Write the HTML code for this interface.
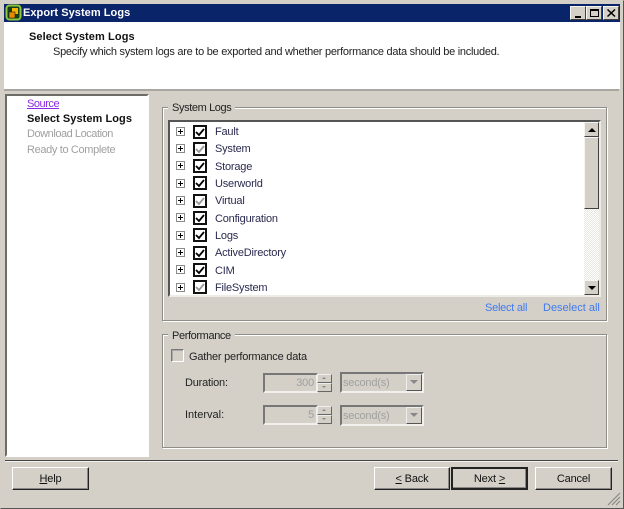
<!DOCTYPE html>
<html><head><meta charset="utf-8"><style>
html,body{margin:0;padding:0}
body{width:624px;height:509px;overflow:hidden;position:relative;background:#d4d0c8;font:11px/13px "Liberation Sans",sans-serif;color:#111}
div,span.a{position:absolute;box-sizing:border-box}
.t{white-space:nowrap}
.sunk{border:2px solid;border-color:#6e6c68 #fff #fff #6e6c68;background:#fff}
.grp{border:1px solid #8f8d88;box-shadow:1px 1px 0 #fff,inset 1px 1px 0 #fff}
.lg{background:#d4d0c8;padding:0 4px;color:#222;white-space:nowrap;letter-spacing:-.38px}
.btn{background:#d4d0c8;border:1px solid;border-color:#fff #222 #222 #fff;box-shadow:inset -1px -1px 0 #8a8884;text-align:center;line-height:23px;height:23px;width:77px;color:#111;letter-spacing:-.15px}
.pm{width:9px;height:9px;border:1px solid #8a8a8a;background:#fff;left:176px}
.pm:before{content:"";position:absolute;left:1px;top:3px;width:5px;height:1px;background:#000}
.pm:after{content:"";position:absolute;left:3px;top:1px;width:1px;height:5px;background:#000}
.cb{width:14px;height:14px;left:193px;border:2px solid #111;background:#fff}
.cb svg{position:absolute;left:0;top:0}
.lbl{left:215px;color:#2a2a50;letter-spacing:-.2px;white-space:nowrap}
.sb{background:#d4d0c8;border:1px solid;border-color:#f4f4f0 #404040 #404040 #f4f4f0}
.dis{background:#d4d0c8;border:2px solid;border-color:#777 #f2f0ec #f2f0ec #777;color:#a0a0a0;letter-spacing:-.2px}
.up{left:4px;top:2px;border:2px solid transparent;border-top:0;border-bottom:2px solid #888;width:0;height:0}
.dn{left:4px;top:2px;border:2px solid transparent;border-bottom:0;border-top:2px solid #888;width:0;height:0}
</style></head><body>
<div style="left:0;top:0;width:624px;height:509px;border:1px solid #d4d0c8;border-right-color:#555;border-bottom-color:#555"></div>
<div style="left:4px;top:4px;width:616px;height:18px;background:#0a246a"></div>
<svg style="position:absolute;left:5px;top:4px" width="18" height="18" viewBox="0 0 18 18"><rect x="1.5" y="1.5" width="14" height="14" rx="3" fill="#184018" stroke="#8cc63f" stroke-width="2"/><rect x="7" y="4" width="6" height="6" fill="#f5b400"/><rect x="4" y="8" width="6" height="6" fill="#e88a00" stroke="#222" stroke-width=".6"/></svg>
<div class="t" style="left:23px;top:7px;color:#fff;font-weight:bold;font-size:11px;letter-spacing:.05px">Export System Logs</div>
<div class="sb" style="left:570px;top:6px;width:16px;height:14px;background:#d4d0c8"><div style="left:4px;top:9px;width:6px;height:2px;background:#000"></div></div>
<div class="sb" style="left:586px;top:6px;width:16px;height:14px"><div style="left:3px;top:2px;width:9px;height:8px;border:1px solid #000;border-top-width:2px"></div></div>
<div class="sb" style="left:603px;top:6px;width:16px;height:14px"><svg style="position:absolute;left:3px;top:2px" width="9" height="8"><path d="M0.5 0.5L8 7.5M8 .5L.5 7.5" stroke="#000" stroke-width="1.5"/></svg></div>
<div style="left:4px;top:22px;width:616px;height:67px;background:#fff"></div>
<div style="left:4px;top:89px;width:615px;height:2px;background:#a8a6a0"></div>
<div class="t" style="left:29px;top:31px;font-weight:bold;color:#111;letter-spacing:.1px">Select System Logs</div>
<div class="t" style="left:53px;top:46px;color:#222;letter-spacing:-.27px">Specify which system logs are to be exported and whether performance data should be included.</div>

<div class="sunk" style="left:5px;top:94px;width:144px;height:363px"></div>
<div class="t" style="left:27px;top:98px;color:#8a2be2;text-decoration:underline;letter-spacing:-.45px">Source</div>
<div class="t" style="left:27px;top:113px;font-weight:bold;color:#111;letter-spacing:.06px">Select System Logs</div>
<div class="t" style="left:27px;top:128px;color:#a0a0a0;letter-spacing:-.45px">Download Location</div>
<div class="t" style="left:27px;top:144px;color:#a0a0a0;letter-spacing:-.35px">Ready to Complete</div>

<div class="grp" style="left:162px;top:107px;width:445px;height:214px"></div>
<div class="lg" style="left:168px;top:102px">System Logs</div>
<div class="sunk" style="left:168px;top:120px;width:433px;height:177px;border-color:#555 #eeece6 #eeece6 #555"></div>

<div class="pm" style="top:127px"></div><div class="cb" style="top:125px"><svg width="10" height="10"><path d="M1 5L4 8L9 2" stroke="#000" stroke-width="1.8" fill="none"/></svg></div><div class="lbl" style="top:126px">Fault</div>
<div class="pm" style="top:144px"></div><div class="cb" style="top:142px"><svg width="10" height="10"><path d="M1 5L4 8L9 2" stroke="#999" stroke-width="1.8" fill="none"/></svg></div><div class="lbl" style="top:143px">System</div>
<div class="pm" style="top:161px"></div><div class="cb" style="top:159px"><svg width="10" height="10"><path d="M1 5L4 8L9 2" stroke="#000" stroke-width="1.8" fill="none"/></svg></div><div class="lbl" style="top:161px">Storage</div>
<div class="pm" style="top:179px"></div><div class="cb" style="top:176px"><svg width="10" height="10"><path d="M1 5L4 8L9 2" stroke="#000" stroke-width="1.8" fill="none"/></svg></div><div class="lbl" style="top:178px">Userworld</div>
<div class="pm" style="top:196px"></div><div class="cb" style="top:194px"><svg width="10" height="10"><path d="M1 5L4 8L9 2" stroke="#999" stroke-width="1.8" fill="none"/></svg></div><div class="lbl" style="top:195px">Virtual</div>
<div class="pm" style="top:213px"></div><div class="cb" style="top:211px"><svg width="10" height="10"><path d="M1 5L4 8L9 2" stroke="#000" stroke-width="1.8" fill="none"/></svg></div><div class="lbl" style="top:213px">Configuration</div>
<div class="pm" style="top:231px"></div><div class="cb" style="top:228px"><svg width="10" height="10"><path d="M1 5L4 8L9 2" stroke="#000" stroke-width="1.8" fill="none"/></svg></div><div class="lbl" style="top:230px">Logs</div>
<div class="pm" style="top:248px"></div><div class="cb" style="top:246px"><svg width="10" height="10"><path d="M1 5L4 8L9 2" stroke="#000" stroke-width="1.8" fill="none"/></svg></div><div class="lbl" style="top:247px">ActiveDirectory</div>
<div class="pm" style="top:265px"></div><div class="cb" style="top:263px"><svg width="10" height="10"><path d="M1 5L4 8L9 2" stroke="#000" stroke-width="1.8" fill="none"/></svg></div><div class="lbl" style="top:265px">CIM</div>
<div class="pm" style="top:283px"></div><div class="cb" style="top:280px"><svg width="10" height="10"><path d="M1 5L4 8L9 2" stroke="#999" stroke-width="1.8" fill="none"/></svg></div><div class="lbl" style="top:282px">FileSystem</div>

<div style="left:584px;top:122px;width:15px;height:173px;background:repeating-conic-gradient(#e8e6e0 0 25%,#fff 0 50%) 0 0/2px 2px"></div>
<div class="sb" style="left:584px;top:122px;width:15px;height:15px"><div style="left:3px;top:5px;border:4px solid transparent;border-top:0;border-bottom:4px solid #000;width:0;height:0"></div></div>
<div class="sb" style="left:584px;top:137px;width:15px;height:72px"></div>
<div class="sb" style="left:584px;top:280px;width:15px;height:15px"><div style="left:3px;top:5px;border:4px solid transparent;border-bottom:0;border-top:4px solid #000;width:0;height:0"></div></div>

<div class="t" style="left:485px;top:302px;color:#3f7bf0;letter-spacing:-.25px">Select all</div>
<div class="t" style="left:543px;top:302px;color:#3f7bf0;letter-spacing:0">Deselect all</div>

<div class="grp" style="left:162px;top:334px;width:445px;height:114px"></div>
<div class="lg" style="left:168px;top:330px">Performance</div>
<div style="left:171px;top:349px;width:13px;height:13px;background:#d4d0c8;border:1px solid;border-color:#777 #fff #fff #777;box-shadow:inset 1px 1px 0 #aaa"></div>
<div class="t" style="left:189px;top:351px;color:#222;letter-spacing:-.22px">Gather performance data</div>

<div class="t" style="left:185px;top:377px;color:#222;letter-spacing:-.2px">Duration:</div>
<div class="dis" style="left:263px;top:373px;width:55px;height:20px;text-align:right;padding-right:2px;line-height:17px">300</div>
<div class="sb" style="left:317px;top:374px;width:15px;height:9px;border-color:#eee #666 #666 #eee"><div class="up"></div></div>
<div class="sb" style="left:317px;top:383px;width:15px;height:9px;border-color:#eee #666 #666 #eee"><div class="dn"></div></div>
<div class="dis" style="left:340px;top:372px;width:84px;height:21px;line-height:19px;padding-left:1px">second(s)</div>
<div class="sb" style="left:406px;top:374px;width:16px;height:17px;border-color:#eee #555 #555 #eee"><div style="left:3px;top:5px;border:4px solid transparent;border-bottom:0;border-top:4px solid #888;width:0;height:0"></div></div>

<div class="t" style="left:185px;top:409px;color:#222">Interval:</div>
<div class="dis" style="left:263px;top:405px;width:55px;height:20px;text-align:right;padding-right:2px;line-height:17px">5</div>
<div class="sb" style="left:317px;top:406px;width:15px;height:9px;border-color:#eee #666 #666 #eee"><div class="up"></div></div>
<div class="sb" style="left:317px;top:415px;width:15px;height:9px;border-color:#eee #666 #666 #eee"><div class="dn"></div></div>
<div class="dis" style="left:340px;top:405px;width:84px;height:21px;line-height:19px;padding-left:1px">second(s)</div>
<div class="sb" style="left:406px;top:407px;width:16px;height:17px;border-color:#eee #555 #555 #eee"><div style="left:3px;top:5px;border:4px solid transparent;border-bottom:0;border-top:4px solid #888;width:0;height:0"></div></div>

<div style="left:5px;top:460px;width:613px;height:1px;background:#444"></div>
<div style="left:5px;top:461px;width:613px;height:1px;background:#f4f2ee"></div>

<div class="btn" style="left:12px;top:467px"><u>H</u>elp</div>
<div class="btn" style="left:374px;top:467px;width:76px"><u>&lt;</u> Back</div>
<div class="btn" style="left:451px;top:467px;border:2px solid #222;line-height:21px"><span>Next <u>&gt;</u></span></div>
<div class="btn" style="left:535px;top:467px">Cancel</div>
<svg style="position:absolute;left:606px;top:491px" width="15" height="15"><path d="M14 2L2 14M14 6L6 14M14 10L10 14" stroke="#8a8884" stroke-width="1.2"/></svg>
</body></html>
